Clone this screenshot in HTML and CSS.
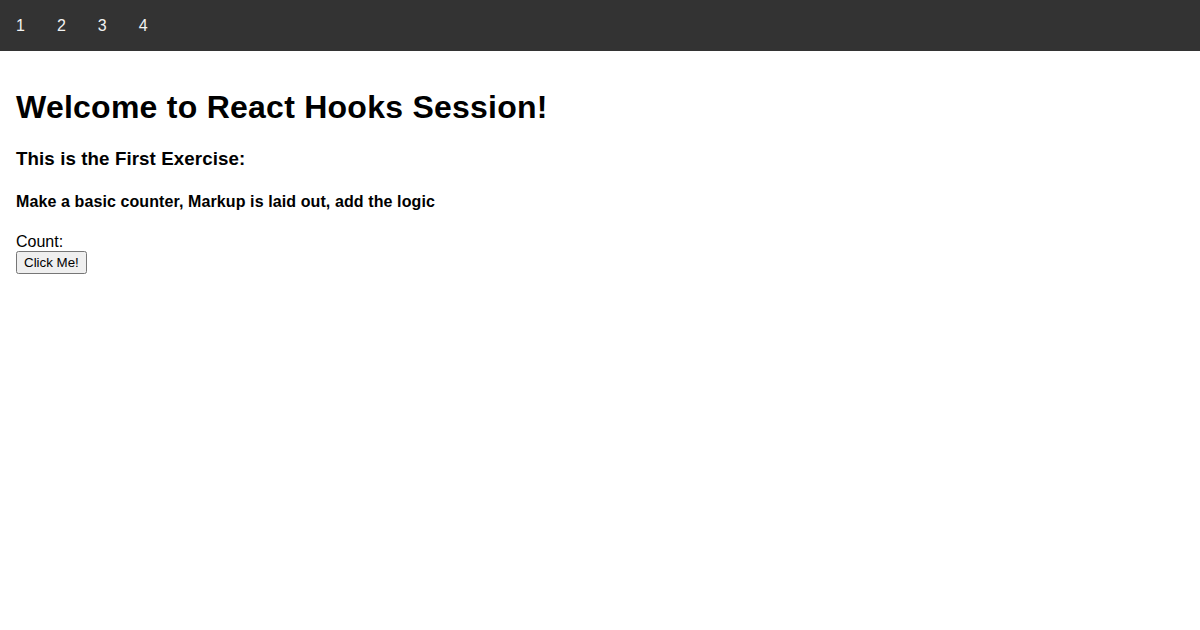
FILE: index.html
```html
<!DOCTYPE html>
<html>
<head>
<meta charset="utf-8">
<link rel="stylesheet" href="styles.css">
</head>
<body>
<nav class="topnav">
  <a href="#">1</a>
  <a href="#">2</a>
  <a href="#">3</a>
  <a href="#">4</a>
</nav>
<main class="content">
  <h1>Welcome to React Hooks Session!</h1>
  <h3>This is the First Exercise:</h3>
  <h4>Make a basic counter, Markup is laid out, add the logic</h4>
  <div class="count">Count: </div>
  <button class="btn">Click Me!</button>
</main>
</body>
</html>
```

FILE: styles.css
```css
body {
  margin: 0;
  font-family: "Liberation Sans", Arial, sans-serif;
  color: #000;
  background: #fff;
}
.topnav {
  background-color: #333;
  overflow: hidden;
  display: flex;
}
.topnav a {
  color: #f2f2f2;
  text-decoration: none;
  font-size: 16px;
  line-height: 19px;
  padding: 16px 16px;
}
.content {
  padding: 16px;
}
.content h1 {
  margin: 22px 0 22.44px;
  letter-spacing: 0.25px;
}
.content h3 {
  margin: 18.72px 0 22.72px;
  letter-spacing: 0.1px;
}
.content h4 {
  margin: 20.72px 0 21.28px;
  letter-spacing: 0.1px;
}
.count {
  line-height: 19px;
}
.btn {
  font-family: "Liberation Sans", Arial, sans-serif;
  font-size: 13.33px;
  padding: 2px 6px;
}
```
